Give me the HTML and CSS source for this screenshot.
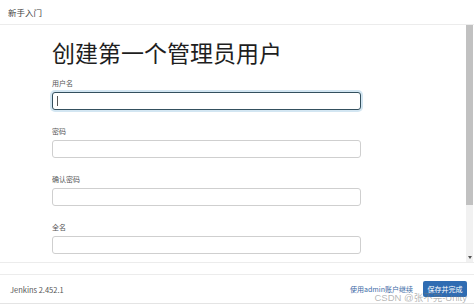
FILE: index.html
```
<!DOCTYPE html>
<html lang="zh-CN">
<head>
    <meta charset="UTF-8">
    <meta name="viewport" content="width=device-width, initial-scale=1.0">
    <title>新手入门</title>
    <link rel="stylesheet" href="styles.css">
</head>
<body>
    <div class="dialog">
        <div class="header">新手入门</div>
        <div class="body">
            <div class="content">
                <h1>创建第一个管理员用户</h1>
                <form>
                    <label for="username">用户名</label>
                    <div class="focused">
                        <input type="text" id="username" class="active">
                    </div>
                    <label for="password1">密码</label>
                    <input type="password" id="password1">
                    <label for="password2">确认密码</label>
                    <input type="password" id="password2">
                    <label for="fullname">全名</label>
                    <input type="text" id="fullname">
                </form>
            </div>
            <div class="scrollbar">
                <div class="thumb"></div>
                <div class="arrow"></div>
            </div>
        </div>
        <div class="footer">
            <span class="version">Jenkins 2.452.1</span>
            <div class="actions">
                <a href="#" class="skip">使用admin账户继续</a>
                <button type="button" class="save">保存并完成</button>
            </div>
        </div>
        <div class="watermark">CSDN @张不完-Unity</div>
    </div>
</body>
</html>
```

FILE: styles.css
```
html, body {
    margin: 0;
    padding: 0;
    background: #fff;
}
body {
    font-family: "Noto Sans CJK SC", "Noto Sans", sans-serif;
    color: #333;
    width: 474px;
    height: 305px;
    overflow: hidden;
}
.dialog {
    position: relative;
    height: 305px;
}
.header {
    height: 24px;
    line-height: 24px;
    padding-left: 8px;
    font-size: 8.5px;
    color: #444;
    border-bottom: 1px solid #ececec;
}
.body {
    display: flex;
    height: 237px;
    border-bottom: 1px solid #ececec;
}
.content {
    flex: 1;
    overflow: hidden;
    padding-left: 52px;
}
.scrollbar {
    width: 7px;
    margin-right: 1px;
    background: #f1f1f1;
    display: flex;
    flex-direction: column;
    justify-content: space-between;
}
.thumb {
    height: 180px;
    background: #c1c1c1;
}
.arrow {
    align-self: center;
    width: 0;
    height: 0;
    margin-bottom: 3px;
    border-left: 2px solid transparent;
    border-right: 2px solid transparent;
    border-top: 3px solid #555;
}
h1 {
    margin: 13px 0 0;
    font-size: 23px;
    line-height: 28px;
    font-weight: normal;
    color: #1e1e1e;
}
form {
    display: flex;
    flex-direction: column;
    width: 309px;
    margin-top: 12px;
}
label {
    font-size: 7px;
    line-height: 10px;
    color: #555;
    margin: 0 0 4px;
}
input {
    display: block;
    box-sizing: border-box;
    width: 309px;
    height: 18px;
    margin: 0 0 16px;
    padding: 0 4px;
    border: 1px solid #cfcfcf;
    border-radius: 3px;
    background: #fff;
    font-size: 8px;
    outline: none;
}
.focused {
    position: relative;
}
input.active {
    border: 1.5px solid #34505e;
    box-shadow: 0 0 0 2px #d3e6f2;
}
.focused::after {
    content: "";
    position: absolute;
    left: 5px;
    top: 4px;
    width: 1px;
    height: 10px;
    background: #555;
}
.footer {
    margin-top: 11px;
    height: 28px;
    border-top: 1px solid #ececec;
    border-bottom: 1px solid #e4e4e4;
    display: flex;
    align-items: center;
    justify-content: space-between;
    padding: 0 7px 0 10px;
}
.version {
    font-size: 7.5px;
    color: #555;
}
.actions {
    display: flex;
    align-items: center;
    gap: 10px;
}
.skip {
    font-size: 7px;
    color: #3d6aa6;
    text-decoration: none;
}
.save {
    width: 44px;
    height: 16px;
    padding: 0;
    border: none;
    border-radius: 2px;
    background: #2f6cb2;
    color: #fff;
    font-family: inherit;
    font-size: 7px;
}
.watermark {
    position: absolute;
    right: 7px;
    bottom: 1px;
    font-family: "Liberation Sans", "Noto Sans CJK SC", sans-serif;
    font-size: 9.5px;
    color: rgba(120, 120, 120, 0.55);
}
```
